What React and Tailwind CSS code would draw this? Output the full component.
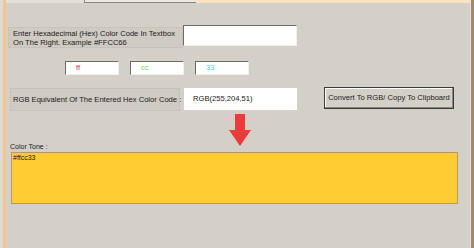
import React from "react";

const font = { fontFamily: '"Liberation Sans", Arial, sans-serif' };

function Sunken({ className = "", children }) {
  return (
    <div
      className={`bg-white border-t border-l border-t-[#6d6a64] border-l-[#6d6a64] border-b border-r border-b-[#f2f0ec] border-r-[#f2f0ec] ${className}`}
    >
      {children}
    </div>
  );
}

function Arrow() {
  return (
    <svg width="22" height="32" viewBox="0 0 22 32">
      <rect x="6" y="0" width="10" height="17" fill="#ec3b3b" />
      <polygon points="0,16 22,16 11,32" fill="#ec3b3b" />
    </svg>
  );
}

export default function App() {
  return (
    <div
      className="w-[474px] h-[248px] bg-[#d4d0c8] flex text-[#1a1a1a] overflow-hidden whitespace-nowrap"
      style={font}
    >
      <div className="w-[3px] bg-[#dedad4]" />
      <div className="w-[3px] bg-[#f6c690]" />
      <div className="flex-1 flex flex-col">
        {/* top strip */}
        <div className="flex h-[3px]">
          <div className="w-[78px] bg-[#e4e1db]" />
          <div className="w-[112px] bg-[#ece9e4] border-b border-[#8a8781] border-l" />
          <div className="flex-1 bg-[#f8e2c2]" />
        </div>

        {/* hex input row */}
        <div className="flex items-start mt-[22px] ml-[2px]">
          <div className="w-[175px] h-[21px] mt-[2px] bg-[#cfcbc3] border border-[#c7c3bb] px-[4px] text-[7.6px] leading-[9px] flex flex-col justify-center">
            <div>Enter Hexadecimal (Hex) Color Code In Textbox</div>
            <div>On The Right. Example #FFCC66</div>
          </div>
          <Sunken className="w-[114px] h-[21px]" />
        </div>

        {/* split values */}
        <div className="flex mt-[13px] ml-[59px] gap-[11px] text-[7.6px]">
          <Sunken className="w-[54px] h-[14px] pl-[10px] leading-[12px] text-[#e0353d]">ff</Sunken>
          <Sunken className="w-[54px] h-[14px] pl-[10px] leading-[12px] text-[#6ddc5a]">cc</Sunken>
          <Sunken className="w-[54px] h-[14px] pl-[10px] leading-[12px] text-[#4ed8dc]">33</Sunken>
        </div>

        {/* rgb row */}
        <div className="flex items-start mt-[12px] ml-[4px]">
          <div className="w-[170px] h-[23px] mt-[1px] bg-[#cfcbc3] border border-[#c7c3bb] px-[2px] text-[7.6px] flex items-center">
            RGB Equivalent Of The Entered Hex Color Code :
          </div>
          <div className="w-[113px] h-[22px] ml-[4px] mt-[1px] bg-white pl-[9px] text-[7.6px] flex items-center">
            RGB(255,204,51)
          </div>
          <button className="w-[130px] h-[22px] ml-[27px] bg-[#d4d0c8] border border-[#3d3b38] shadow-[inset_-1px_-1px_0_#8a8781,inset_1px_1px_0_#ffffff] text-[7.6px] text-[#222] flex items-center justify-center">
            Convert To RGB/ Copy To Clipboard
          </button>
        </div>

        {/* arrow */}
        <div className="flex ml-[223px] mt-[3px]">
          <Arrow />
        </div>

        <div className="ml-[4px] -mt-[4px] text-[7px] leading-[9px]">Color Tone :</div>

        {/* color box */}
        <div className="ml-[5px] mt-[1px] w-[447px] h-[52px] bg-[#ffcc33] border border-[#b89a5e] px-[1px] text-[7px] leading-[10px]">
          #ffcc33
        </div>
      </div>
      <div className="w-[1px] bg-[#e4e1dc]" />
      <div className="w-[3px] bg-[#a2896a]" />
    </div>
  );
}
